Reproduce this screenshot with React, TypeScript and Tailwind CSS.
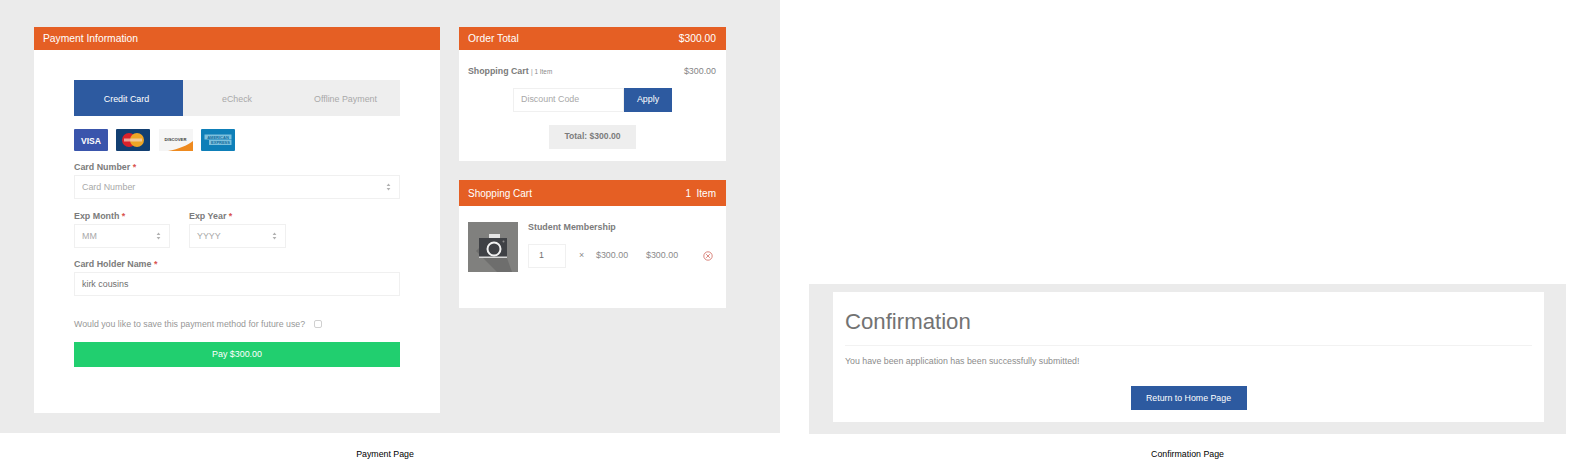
const font = "font-['Liberation_Sans',Arial,sans-serif]";

const Stepper = () => (
  <svg width="5" height="8" viewBox="0 0 5 8" fill="#b0b0b0">
    <path d="M2.5 0.5 4.4 3H0.6Z" />
    <path d="M2.5 7.5 0.6 5H4.4Z" />
  </svg>
);

const Required = () => <span className="text-[#d9534f]"> *</span>;

const FieldLabel = ({ text }: { text: string }) => (
  <div className="h-[14px] text-[8.9px] leading-[16px] font-bold text-[#7b7b7b]">
    {text}
    <Required />
  </div>
);

const SelectBox = ({ text, className }: { text: string; className: string }) => (
  <div className={`h-[24px] flex items-center justify-between pl-[7px] pr-2 border border-[#f0f0f0] text-[8.9px] text-[#a8a8a8] ${className}`}>
    <span className="pt-[2px]">{text}</span>
    <Stepper />
  </div>
);

const PanelHeader = ({ left, right, tall }: { left: string; right: string; tall?: boolean }) => (
  <div className={`flex items-center justify-between pl-[9px] pr-[10px] bg-[#e55f24] text-white ${tall ? "h-[26px] text-[10px]" : "h-[23px] text-[10.3px]"}`}>
    <span>{left}</span>
    <span className="whitespace-pre">{right}</span>
  </div>
);

const CardLogos = () => (
  <div className="flex gap-2 h-[22px]">
    <svg width="34" height="22" viewBox="0 0 34 22">
      <rect width="34" height="22" rx="1" fill="#3a55ac" />
      <text x="17" y="14.5" textAnchor="middle" fontSize="8.6" fontWeight="700" fill="#ffffff" fontFamily="Liberation Sans">VISA</text>
    </svg>
    <svg width="34" height="22" viewBox="0 0 34 22">
      <rect width="34" height="22" rx="1" fill="#123f72" />
      <circle cx="13" cy="11" r="7" fill="#d9222a" />
      <circle cx="21" cy="11" r="7" fill="#eea626" />
      <rect x="8" y="9.5" width="18" height="3" fill="#f3d9c8" opacity="0.7" />
    </svg>
    <svg width="34" height="22" viewBox="0 0 34 22" className="ml-[0.5px]">
      <rect width="34" height="22" fill="#f5f5f5" />
      <path d="M9 22C20 20 29 16 34 12V22Z" fill="#ee8a1f" />
      <text x="16.5" y="12" textAnchor="middle" fontSize="4.2" fontWeight="700" fill="#3b3b3b" fontFamily="Liberation Sans">DISCOVER</text>
    </svg>
    <svg width="34" height="22" viewBox="0 0 34 22">
      <rect width="34" height="22" rx="1" fill="#0e7fb8" />
      <rect x="3.5" y="5.5" width="27" height="5" fill="#7cc0dd" />
      <rect x="8" y="11" width="22.5" height="5" fill="#7cc0dd" />
      <text x="17" y="9.5" textAnchor="middle" fontSize="4" fontWeight="700" fill="#0e6c9e" fontFamily="Liberation Sans">AMERICAN</text>
      <text x="19.5" y="15" textAnchor="middle" fontSize="4" fontWeight="700" fill="#0e6c9e" fontFamily="Liberation Sans">EXPRESS</text>
    </svg>
  </div>
);

const PaymentForm = () => (
  <div className="w-[406px] h-[386px] bg-white shrink-0">
    <PanelHeader left="Payment Information" right="" />
    <div className="px-10 pt-[30px]">
      <div className="flex h-[36px] bg-[#eeeeee] text-[8.9px] text-[#a9a9a9] text-center">
        <div className="w-[109px] bg-[#2d5aa0] text-white flex items-center justify-center pt-[4px] pr-[4px]">Credit Card</div>
        <div className="w-[108px] flex items-center justify-center pt-[4px]">eCheck</div>
        <div className="w-[109px] flex items-center justify-center pt-[4px]">Offline Payment</div>
      </div>
      <div className="mt-[13px]">
        <CardLogos />
      </div>
      <div className="mt-[8px]">
        <FieldLabel text="Card Number" />
        <SelectBox text="Card Number" className="mt-[2px]" />
      </div>
      <div className="flex gap-[19px] mt-[9px]">
        <div>
          <FieldLabel text="Exp Month" />
          <SelectBox text="MM" className="mt-[2px] w-[96px]" />
        </div>
        <div>
          <FieldLabel text="Exp Year" />
          <SelectBox text="YYYY" className="mt-[2px] w-[97px]" />
        </div>
      </div>
      <div className="mt-[8px]">
        <FieldLabel text="Card Holder Name" />
        <div className="mt-[2px] h-[24px] flex items-center pl-[7px] pt-[2px] border border-[#f0f0f0] text-[8.9px] text-[#6f6f6f]">kirk cousins</div>
      </div>
      <div className="flex items-center gap-[9px] mt-[21px] h-[14px] text-[8.8px] text-[#979797]">
        <span className="pt-[2px]">Would you like to save this payment method for future use?</span>
        <span className="w-[8px] h-[8px] rounded-[2px] border border-[#d0d0d0]" />
      </div>
      <div className="mt-[11px] h-[25px] bg-[#21cf6f] text-white text-[8.9px] flex items-center justify-center">Pay $300.00</div>
    </div>
  </div>
);

const OrderTotal = () => (
  <div className="h-[134px] bg-white">
    <PanelHeader left="Order Total" right="$300.00" />
    <div className="flex justify-between items-center pl-[9px] pr-[10px] mt-[15px] h-[14px]">
      <span className="text-[8.8px] font-bold text-[#7b7b7b]">
        Shopping Cart <span className="text-[6.4px] font-normal text-[#8a8a8a]">| 1 Item</span>
      </span>
      <span className="text-[8.9px] text-[#858585]">$300.00</span>
    </div>
    <div className="flex justify-center mt-[9px]">
      <div className="w-[111px] h-[24px] border border-[#f0f0f0] flex items-center pl-[7px] text-[8.9px] text-[#a8a8a8]">Discount Code</div>
      <div className="w-[48px] h-[24px] bg-[#2d5aa0] text-white text-[8.9px] flex items-center justify-center">Apply</div>
    </div>
    <div className="flex justify-center mt-[13px]">
      <div className="w-[87px] h-[24px] bg-[#eeeeee] pb-[2px] text-[8.6px] font-bold text-[#7b7b7b] flex items-center justify-center">Total: $300.00</div>
    </div>
  </div>
);

const CameraThumb = () => (
  <svg width="50" height="50" viewBox="0 0 50 50" className="shrink-0">
    <rect width="50" height="50" fill="#80807e" />
    <path d="M11 26 8 29 29 50H44L39 36Z" fill="#6e6e6d" />
    <rect x="11" y="16" width="28" height="20" fill="#3f4145" />
    <rect x="21" y="12" width="11" height="4" fill="#e4e4e4" />
    <rect x="11" y="34.5" width="28" height="1.5" fill="#d8d8d8" />
    <circle cx="26" cy="27" r="6.5" fill="#3f4145" stroke="#f2f2f2" strokeWidth="2" />
    <circle cx="35.5" cy="19.5" r="1" fill="#8b8b8b" />
  </svg>
);

const ShoppingCart = () => (
  <div className="h-[128px] bg-white mt-[19px]">
    <PanelHeader left="Shopping Cart" right="1  Item" tall />
    <div className="flex gap-[10px] pl-[9px] pt-[16px]">
      <CameraThumb />
      <div>
        <div className="text-[8.9px] font-bold text-[#7b7b7b] leading-[13px] mt-[-1px]">Student Membership</div>
        <div className="flex items-center mt-[10px] text-[8.9px] text-[#8a8a8a]">
          <div className="w-[38px] h-[24px] border border-[#f0f0f0] flex items-center pl-[10px] text-[#6f6f6f]">1</div>
          <span className="ml-[13px] w-[17px]">×</span>
          <span className="w-[50px]">$300.00</span>
          <span className="w-[57px]">$300.00</span>
          <svg width="10" height="10" viewBox="0 0 10 10" fill="none" stroke="#d0695f" strokeWidth="0.8">
            <circle cx="5" cy="5" r="4.2" />
            <path d="M3.2 3.2 6.8 6.8M6.8 3.2 3.2 6.8" />
          </svg>
        </div>
      </div>
    </div>
  </div>
);

const PaymentPage = () => (
  <div className="w-[780px] shrink-0">
    <div className="h-[433px] bg-[#ebebeb] flex gap-[19px] pl-[34px] pt-[27px]">
      <PaymentForm />
      <div className="w-[267px]">
        <OrderTotal />
        <ShoppingCart />
      </div>
    </div>
    <div className="text-center text-[8.8px] text-black mt-[14px] pr-[10px] leading-[14px]">Payment Page</div>
  </div>
);

const ConfirmationPage = () => (
  <div className="w-[757px] ml-[29px] pt-[284px]">
    <div className="h-[150px] bg-[#ebebeb] pt-[8px] pl-[24px] pr-[22px]">
      <div className="h-[130px] bg-white px-3">
        <div className="h-[54px] border-b border-[#f2f2f2] flex items-center text-[22.2px] text-[#737373] pt-[6px]">Confirmation</div>
        <div className="mt-[8px] text-[8.8px] leading-[14px] text-[#8c8c8c]">You have been application has been successfully submitted!</div>
        <div className="flex justify-center mt-[18px]">
          <div className="w-[116px] h-[24px] bg-[#2d5aa0] text-white text-[8.8px] pt-[2px] flex items-center justify-center">Return to Home Page</div>
        </div>
      </div>
    </div>
    <div className="text-center text-[8.8px] text-black mt-[13px] leading-[14px]">Confirmation Page</div>
  </div>
);

export default function App() {
  return (
    <div className={`flex w-[1576px] h-[474px] bg-white overflow-hidden ${font}`}>
      <PaymentPage />
      <ConfirmationPage />
    </div>
  );
}
